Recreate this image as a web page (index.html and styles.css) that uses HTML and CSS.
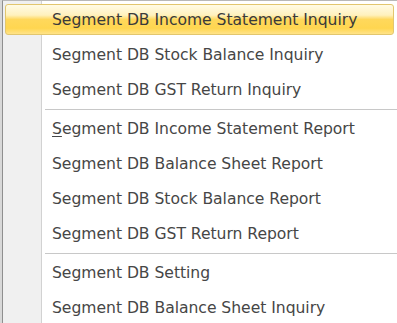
FILE: index.html
```html
<!DOCTYPE html>
<html>
<head>
<meta charset="utf-8">
<link rel="stylesheet" href="styles.css">
</head>
<body>
<div class="desk">
  <div class="menu">
    <div class="item active"><span class="label">Segment DB Income Statement Inquiry</span></div>
    <div class="item"><span class="label">Segment DB Stock Balance Inquiry</span></div>
    <div class="item"><span class="label">Segment DB GST Return Inquiry</span></div>
    <div class="sep"></div>
    <div class="item"><span class="label"><u>S</u>egment DB Income Statement Report</span></div>
    <div class="item"><span class="label">Segment DB Balance Sheet Report</span></div>
    <div class="item"><span class="label">Segment DB Stock Balance Report</span></div>
    <div class="item"><span class="label">Segment DB GST Return Report</span></div>
    <div class="sep"></div>
    <div class="item"><span class="label">Segment DB Setting</span></div>
    <div class="item"><span class="label">Segment DB Balance Sheet Inquiry</span></div>
  </div>
</div>
</body>
</html>
```

FILE: styles.css
```css
html, body {
  margin: 0;
  padding: 0;
  background: #ffffff;
  overflow: hidden;
}
.desk {
  width: 397px;
  height: 323px;
  background: #d8d8d8;
  padding-left: 2px;
  box-sizing: border-box;
  overflow: hidden;
}
.menu {
  height: 323px;
  border-left: 1px solid #8f8f8f;
  border-top: 1px solid #b8b8b8;
  background: linear-gradient(to right, #f0f0f0 0, #f0f0f0 38px, #d2d2d2 38px, #d2d2d2 39px, #ffffff 39px, #ffffff 100%);
  padding-top: 2px;
  box-sizing: border-box;
  font-family: "DejaVu Sans", Tahoma, sans-serif;
  font-size: 15.6px;
  color: #464646;
}
.item {
  height: 35px;
  display: flex;
  align-items: center;
  padding-left: 49px;
  box-sizing: border-box;
  margin-right: 2px;
}
.item.active {
  margin: 1px 3px 2px 2px;
  height: 31px;
  padding-left: 46px;
  border: 1px solid #e2c66e;
  border-radius: 3px;
  background: linear-gradient(to bottom, #fffbe6 0%, #fff1bd 35%, #ffd85c 50%, #ffd650 80%, #ffe389 100%);
  color: #3a3a3a;
}
.label {
  white-space: nowrap;
  letter-spacing: -0.03px;
}
.label u {
  text-decoration-thickness: 1px;
  text-underline-offset: 2px;
}
.sep {
  height: 4px;
  margin-left: 42px;
  display: flex;
  align-items: center;
}
.sep::before {
  content: "";
  display: block;
  width: 100%;
  height: 1px;
  background: #c8c8c8;
  box-shadow: 0 1px 0 #ffffff;
}
```
